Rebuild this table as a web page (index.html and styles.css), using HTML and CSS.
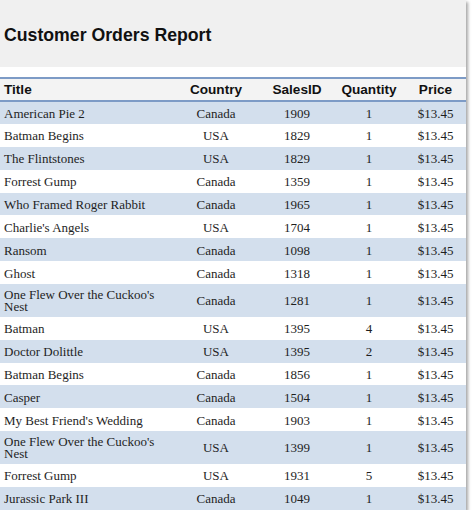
FILE: index.html
```html
<!DOCTYPE html>
<html>
<head>
<meta charset="utf-8">
<link rel="stylesheet" href="styles.css">
</head>
<body>
<div class="report">
  <div class="report-head"><h1 class="report-title">Customer Orders Report</h1></div>
  <table class="orders">
    <colgroup>
      <col class="c-title"><col class="c-country"><col class="c-sales"><col class="c-qty"><col class="c-price">
    </colgroup>
    <thead>
      <tr><th class="left">Title</th><th>Country</th><th>SalesID</th><th>Quantity</th><th class="price">Price</th></tr>
    </thead>
    <tbody>
      <tr><td class="left">American Pie 2</td><td>Canada</td><td>1909</td><td>1</td><td class="price">$13.45</td></tr>
      <tr><td class="left">Batman Begins</td><td>USA</td><td>1829</td><td>1</td><td class="price">$13.45</td></tr>
      <tr><td class="left">The Flintstones</td><td>USA</td><td>1829</td><td>1</td><td class="price">$13.45</td></tr>
      <tr><td class="left">Forrest Gump</td><td>Canada</td><td>1359</td><td>1</td><td class="price">$13.45</td></tr>
      <tr><td class="left">Who Framed Roger Rabbit</td><td>Canada</td><td>1965</td><td>1</td><td class="price">$13.45</td></tr>
      <tr><td class="left">Charlie's Angels</td><td>USA</td><td>1704</td><td>1</td><td class="price">$13.45</td></tr>
      <tr><td class="left">Ransom</td><td>Canada</td><td>1098</td><td>1</td><td class="price">$13.45</td></tr>
      <tr><td class="left">Ghost</td><td>Canada</td><td>1318</td><td>1</td><td class="price">$13.45</td></tr>
      <tr><td class="left">One Flew Over the Cuckoo's Nest</td><td>Canada</td><td>1281</td><td>1</td><td class="price">$13.45</td></tr>
      <tr><td class="left">Batman</td><td>USA</td><td>1395</td><td>4</td><td class="price">$13.45</td></tr>
      <tr><td class="left">Doctor Dolittle</td><td>USA</td><td>1395</td><td>2</td><td class="price">$13.45</td></tr>
      <tr><td class="left">Batman Begins</td><td>Canada</td><td>1856</td><td>1</td><td class="price">$13.45</td></tr>
      <tr><td class="left">Casper</td><td>Canada</td><td>1504</td><td>1</td><td class="price">$13.45</td></tr>
      <tr><td class="left">My Best Friend's Wedding</td><td>Canada</td><td>1903</td><td>1</td><td class="price">$13.45</td></tr>
      <tr><td class="left">One Flew Over the Cuckoo's Nest</td><td>USA</td><td>1399</td><td>1</td><td class="price">$13.45</td></tr>
      <tr><td class="left">Forrest Gump</td><td>USA</td><td>1931</td><td>5</td><td class="price">$13.45</td></tr>
      <tr><td class="left">Jurassic Park III</td><td>Canada</td><td>1049</td><td>1</td><td class="price">$13.45</td></tr>
    </tbody>
  </table>
</div>
</body>
</html>
```
FILE: styles.css
```css
html, body {
  margin: 0;
  padding: 0;
  background: #ffffff;
}

.report {
  width: 466px;
  background: #ffffff;
  box-shadow: 2px 2px 3px rgba(0, 0, 0, 0.35);
}

.report-head {
  height: 67px;
  background: #f0f0f0;
  display: flex;
  align-items: center;
  padding-left: 4px;
  margin-bottom: 10px;
}

.report-title {
  margin: 0;
  font-family: "Liberation Sans", Arial, sans-serif;
  font-weight: bold;
  font-size: 17.7px;
  color: #111111;
  position: relative;
  top: 1.5px;
}

.orders {
  width: 466px;
  border-collapse: collapse;
  table-layout: fixed;
}

.c-title { width: 175px; }
.c-country { width: 82px; }
.c-sales { width: 80px; }
.c-qty { width: 64px; }
.c-price { width: 65px; }

.orders th {
  font-family: "Liberation Sans", Arial, sans-serif;
  font-weight: bold;
  font-size: 13.6px;
  color: #111111;
  background: #f3f3f3;
  border-top: 2px solid #7d9bc6;
  border-bottom: 2px solid #7d9bc6;
  height: 20px;
  padding: 0 2px;
  text-align: center;
  line-height: 21px;
}

.orders td {
  font-family: "Liberation Serif", "Times New Roman", serif;
  font-size: 13px;
  line-height: 12.3px;
  color: #1e1e1e;
  padding: 5px 2px 3px;
  text-align: center;
  vertical-align: middle;
}

.orders tbody tr {
  height: 22.9px;
}

.orders tbody tr:nth-child(odd) {
  background: #d3dfed;
}

.orders .left {
  text-align: left;
  padding-left: 4px;
}

.orders .price {
  padding-left: 6px;
}
```
